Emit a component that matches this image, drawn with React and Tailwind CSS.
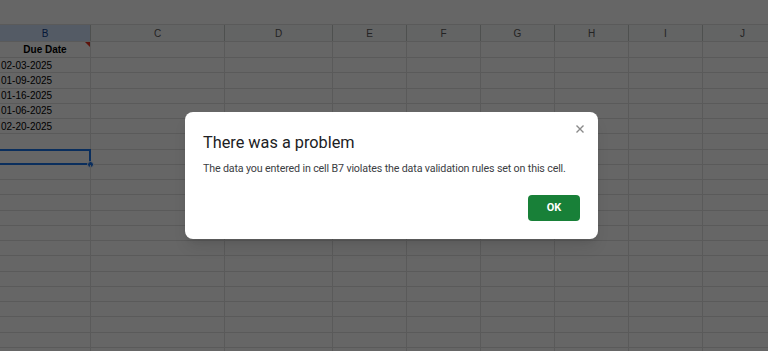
import React from "react";

const cols = [
  { k: "B", w: 91, sel: true },
  { k: "C", w: 134 },
  { k: "D", w: 108 },
  { k: "E", w: 74 },
  { k: "F", w: 74 },
  { k: "G", w: 74 },
  { k: "H", w: 74 },
  { k: "I", w: 74 },
  { k: "J", w: 80 },
];

const bVals = ["Due Date", "02-03-2025", "01-09-2025", "01-16-2025", "01-06-2025", "02-20-2025"];

export default function App() {
  const rows = Array.from({ length: 21 }, (_, i) => i);
  return (
    <div className="relative w-[768px] h-[351px] overflow-hidden bg-white font-['Liberation_Sans',Arial,sans-serif]">
      <div className="h-[24px] bg-white" />
      {/* column header */}
      <div className="flex h-[18px] border-y border-[#e1e1e1] bg-[#f8f9fa]">
        {cols.map((c) => (
          <div
            key={c.k}
            style={{ width: c.w }}
            className={
              c.sel
                ? "shrink-0 flex items-center justify-center border-r border-[#c4c7c5] bg-[#d3e3fd] text-[10px] text-[#0b3d8c]"
                : "shrink-0 flex items-center justify-center border-r border-[#c4c7c5] text-[10px] text-[#575757]"
            }
          >
            {c.k}
          </div>
        ))}
      </div>
      {rows.map((r) => (
        <div
          key={r}
          className={r === 0 ? "flex h-[16px] border-b border-[#e2e2e2]" : "flex h-[15.25px] border-b border-[#e2e2e2]"}
        >
          {cols.map((c, ci) => (
            <div key={c.k} style={{ width: c.w }} className="relative shrink-0 border-r border-[#e2e2e2]">
              {ci === 0 && r === 0 && (
                <>
                  <div className="flex h-full items-center justify-center pt-[1px] text-[10px] font-bold leading-none text-black">
                    {bVals[0]}
                  </div>
                  <div className="absolute right-0 top-0 h-0 w-0 border-l-[5px] border-t-[5px] border-l-transparent border-t-[#e8321f]" />
                </>
              )}
              {ci === 0 && r > 0 && r < 6 && (
                <div className="flex h-full items-center pl-[1px] pt-[1px] text-[10px] leading-none text-black">{bVals[r]}</div>
              )}
              {ci === 0 && r === 7 && (
                <>
                  <div className="absolute -left-[2px] -top-[1px] right-[-1px] bottom-[-1px] border-2 border-[#1a73e8]" />
                  <div className="absolute -bottom-[4px] -right-[4px] h-[7px] w-[7px] rounded-full border border-white bg-[#1a73e8]" />
                </>
              )}
            </div>
          ))}
        </div>
      ))}

      {/* modal scrim */}
      <div className="absolute inset-0 bg-black/60" />

      {/* dialog */}
      <div className="absolute left-[185px] top-[112px] flex h-[127px] w-[413px] flex-col rounded-lg bg-white px-[18px] pb-[18px] pt-[19px] shadow-lg font-['Roboto',sans-serif]">
        <div className="whitespace-nowrap text-[16.3px] leading-[24px] text-[#202124]">There was a problem</div>
        <div className="mt-[6px] whitespace-nowrap text-[10.7px] leading-[16px] tracking-[-0.15px] text-[#3c4043]">
          The data you entered in cell B7 violates the data validation rules set on this cell.
        </div>
        <div className="mt-auto flex justify-end">
          <div className="flex h-[26px] w-[52px] items-center justify-center rounded-[4px] bg-[#188038] text-[11px] font-bold text-white">
            OK
          </div>
        </div>
        <svg className="absolute right-[14px] top-[13px]" width="8" height="8" viewBox="0 0 8 8">
          <path d="M0.5 0.5 L7.5 7.5 M7.5 0.5 L0.5 7.5" stroke="#8a8a8a" strokeWidth="1.4" />
        </svg>
      </div>
    </div>
  );
}
